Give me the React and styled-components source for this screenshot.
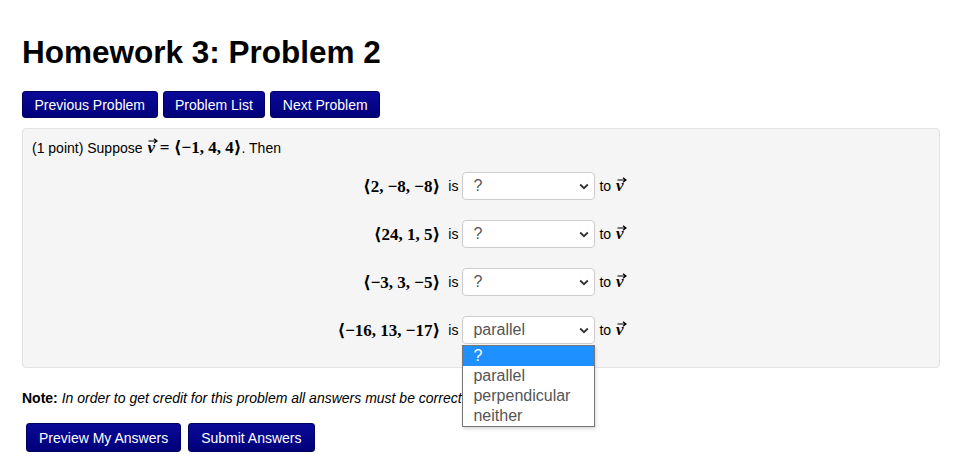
import React from 'react';
import styled, { createGlobalStyle } from 'styled-components';

// ------------- Styled components -------------
const GlobalStyle = createGlobalStyle`
  body {
    margin: 8px;
    background: #ffffff;
    color: #000000;
    font-family: "Liberation Sans", Arial, sans-serif;
    font-size: 14px;
  }
`;

const Page = styled.div`
  padding: 0 20px 0 14px;
`;

const Titulo = styled.h1`
  margin: 26px 0 0;
  font-size: 31.5px;
  line-height: 36px;
  font-weight: bold;
`;

const BarraNav = styled.div`
  display: flex;
  gap: 5px;
  margin-top: 21px;
`;

const Botao = styled.button`
  margin: 0;
  height: ${p => (p.$alto ? '29px' : '27px')};
  padding: 0 ${p => (p.$alto ? '12px' : '11.5px')};
  border: 1px solid #00005e;
  border-radius: 3px;
  background: linear-gradient(to bottom, #0a0a98, #00007a);
  color: #ffffff;
  font-family: "Liberation Sans", Arial, sans-serif;
  font-size: 14px;
  line-height: 16px;
  cursor: pointer;
`;

const Painel = styled.div`
  margin-top: 10px;
  padding: 8px 9px 23px;
  background: #f5f5f5;
  border: 1px solid #e3e3e3;
  border-radius: 4px;
`;

const Intro = styled.div`
  height: 22px;
  line-height: 22px;
  white-space: nowrap;
`;

const Math = styled.span`
  font-family: "Liberation Serif", "DejaVu Serif", serif;
  font-size: 17px;
  font-weight: bold;
  white-space: nowrap;
`;

const Grade = styled.div`
  display: grid;
  grid-template-columns: auto auto auto auto;
  justify-content: center;
  align-items: center;
  column-gap: 4px;
  row-gap: 20px;
  margin-top: 13px;
`;

const CelulaMath = styled.div`
  justify-self: end;
  margin-right: 4px;
`;

const Caixa = styled.div`
  position: relative;
  box-sizing: border-box;
  display: flex;
  align-items: center;
  justify-content: space-between;
  width: 133px;
  height: 28px;
  padding: 0 5px 0 10px;
  background: #ffffff;
  border: 1px solid #cccccc;
  border-radius: 4px;
  color: #555555;
  font-size: 16px;
`;

const Lista = styled.div`
  position: absolute;
  top: calc(100% + 2px);
  left: -1px;
  width: 133px;
  box-sizing: border-box;
  background: #ffffff;
  border: 1px solid #767676;
  box-shadow: 1px 2px 3px rgba(0, 0, 0, 0.15);
  z-index: 2;
`;

const Opcao = styled.div`
  height: 20px;
  line-height: 20px;
  padding-left: 10px;
  font-size: 16px;
  color: ${p => (p.$ativo ? '#ffffff' : '#555555')};
  background: ${p => (p.$ativo ? '#1e90ff' : 'transparent')};
`;

const VecWrap = styled.span`
  position: relative;
  display: inline-block;
  font-family: "Liberation Serif", "DejaVu Serif", serif;
  font-style: italic;
  font-weight: bold;
  font-size: 17px;
  padding: 0 1px;
`;

const Seta = styled.svg`
  position: absolute;
  left: 2px;
  top: 1px;
`;

const Nota = styled.div`
  margin-top: 22px;
  line-height: 16px;
  white-space: nowrap;
`;

const BarraFinal = styled.div`
  display: flex;
  gap: 7px;
  margin: 17px 0 0 4px;
`;
// ----------Final styled components -----------

function Vec() {
  return (
    <VecWrap>
      v
      <Seta width="10" height="6" viewBox="0 0 10 6">
        <path d="M0.5 3 H8.5 M6 0.8 L9 3 L6 5.2" stroke="#000" strokeWidth="1.2" fill="none" />
      </Seta>
    </VecWrap>
  );
}

function Chevron() {
  return (
    <svg width="10" height="7" viewBox="0 0 10 7">
      <path d="M1.2 1.5 L5 5.2 L8.8 1.5" stroke="#333" strokeWidth="1.8" fill="none" />
    </svg>
  );
}

const linhas = [
  { v: '⟨2, −8, −8⟩', valor: '?' },
  { v: '⟨24, 1, 5⟩', valor: '?' },
  { v: '⟨−3, 3, −5⟩', valor: '?' },
  { v: '⟨−16, 13, −17⟩', valor: 'parallel', aberto: true },
];

const opcoes = ['?', 'parallel', 'perpendicular', 'neither'];

export default function App() {
  return (
    <Page>
      <GlobalStyle />
      <Titulo>Homework 3: Problem 2</Titulo>

      <BarraNav>
        <Botao>Previous Problem</Botao>
        <Botao>Problem List</Botao>
        <Botao>Next Problem</Botao>
      </BarraNav>

      <Painel>
        <Intro>
          (1 point) Suppose <Vec /> <Math>= ⟨−1, 4, 4⟩</Math>. Then
        </Intro>

        <Grade>
          {linhas.map((l, i) => (
            <React.Fragment key={i}>
              <CelulaMath><Math>{l.v}</Math></CelulaMath>
              <span>is</span>
              <Caixa>
                <span>{l.valor}</span>
                <Chevron />
                {l.aberto && (
                  <Lista>
                    {opcoes.map((o, j) => (
                      <Opcao key={o} $ativo={j === 0}>{o}</Opcao>
                    ))}
                  </Lista>
                )}
              </Caixa>
              <span>to <Vec /></span>
            </React.Fragment>
          ))}
        </Grade>
      </Painel>

      <Nota>
        <b>Note:</b> <i>In order to get credit for this problem all answers must be correct.</i>
      </Nota>

      <BarraFinal>
        <Botao $alto>Preview My Answers</Botao>
        <Botao $alto>Submit Answers</Botao>
      </BarraFinal>
    </Page>
  );
}
